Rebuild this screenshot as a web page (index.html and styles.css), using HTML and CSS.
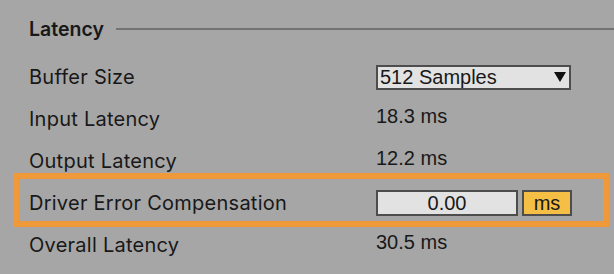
FILE: index.html
```html
<!DOCTYPE html>
<html>
<head>
<meta charset="utf-8">
<link rel="stylesheet" href="styles.css">
</head>
<body>
<div class="panel">
  <div class="header">
    <span class="title">Latency</span>
    <span class="rule"></span>
  </div>
  <div class="rows">
    <div class="row">
      <span class="label">Buffer Size</span>
      <div class="select">
        <span>512 Samples</span>
        <svg class="arrow" width="12" height="10" viewBox="0 0 12 10"><polygon points="0,0 12,0 6,10" fill="#111"/></svg>
      </div>
    </div>
    <div class="row">
      <span class="label">Input Latency</span>
      <span class="value">18.3 ms</span>
    </div>
    <div class="row">
      <span class="label">Output Latency</span>
      <span class="value">12.2 ms</span>
    </div>
    <div class="row highlight">
      <span class="label">Driver Error Compensation</span>
      <div class="field">0.00</div>
      <div class="unit">ms</div>
    </div>
    <div class="row">
      <span class="label">Overall Latency</span>
      <span class="value">30.5 ms</span>
    </div>
  </div>
</div>
</body>
</html>
```

FILE: styles.css
```css
html, body {
  margin: 0;
  padding: 0;
}
body {
  width: 614px;
  height: 274px;
  overflow: hidden;
  background: #a6a6a6;
  color: #181818;
  font-family: Inter, "Noto Sans", sans-serif;
}
.panel {
  padding: 17px 0 0 29px;
}
.header {
  display: flex;
  align-items: center;
  height: 24px;
  gap: 12px;
}
.title {
  font-weight: 600;
  font-size: 19.5px;
}
.rule {
  flex: 1;
  height: 2px;
  background: #737373;
}
.rows {
  margin-top: 15px;
  display: flex;
  flex-direction: column;
}
.row {
  display: flex;
  align-items: center;
  height: 42px;
}
.label {
  width: 347px;
  flex: none;
  font-size: 20px;
  letter-spacing: 0.25px;
  white-space: nowrap;
}
.value {
  font-family: "Liberation Sans", Arial, sans-serif;
  font-size: 20px;
  padding-bottom: 6px;
}
.select {
  box-sizing: border-box;
  width: 195px;
  height: 25px;
  border: 2px solid #4d4d4d;
  background: #e2e2e2;
  padding: 0 3px 0 2px;
  display: flex;
  align-items: center;
  justify-content: space-between;
  font-family: "Liberation Sans", Arial, sans-serif;
  font-size: 20px;
  line-height: 1;
}
.arrow {
  display: block;
}
.row.highlight {
  height: 26px;
  padding: 11px 0 5px 10px;
  border: 6px solid #f0993a;
  margin: -9px 5px -3px -16px;
}
.field {
  box-sizing: border-box;
  width: 142px;
  height: 26px;
  border: 2px solid #4d4d4d;
  background: #e2e2e2;
  display: flex;
  align-items: center;
  justify-content: center;
  font-family: "Liberation Sans", Arial, sans-serif;
  font-size: 20px;
}
.unit {
  box-sizing: border-box;
  width: 50px;
  height: 26px;
  margin-left: 4px;
  border: 2px solid #4d4d4d;
  background: #f5be45;
  display: flex;
  align-items: center;
  justify-content: center;
  font-family: "Liberation Sans", Arial, sans-serif;
  font-size: 20px;
}
```
